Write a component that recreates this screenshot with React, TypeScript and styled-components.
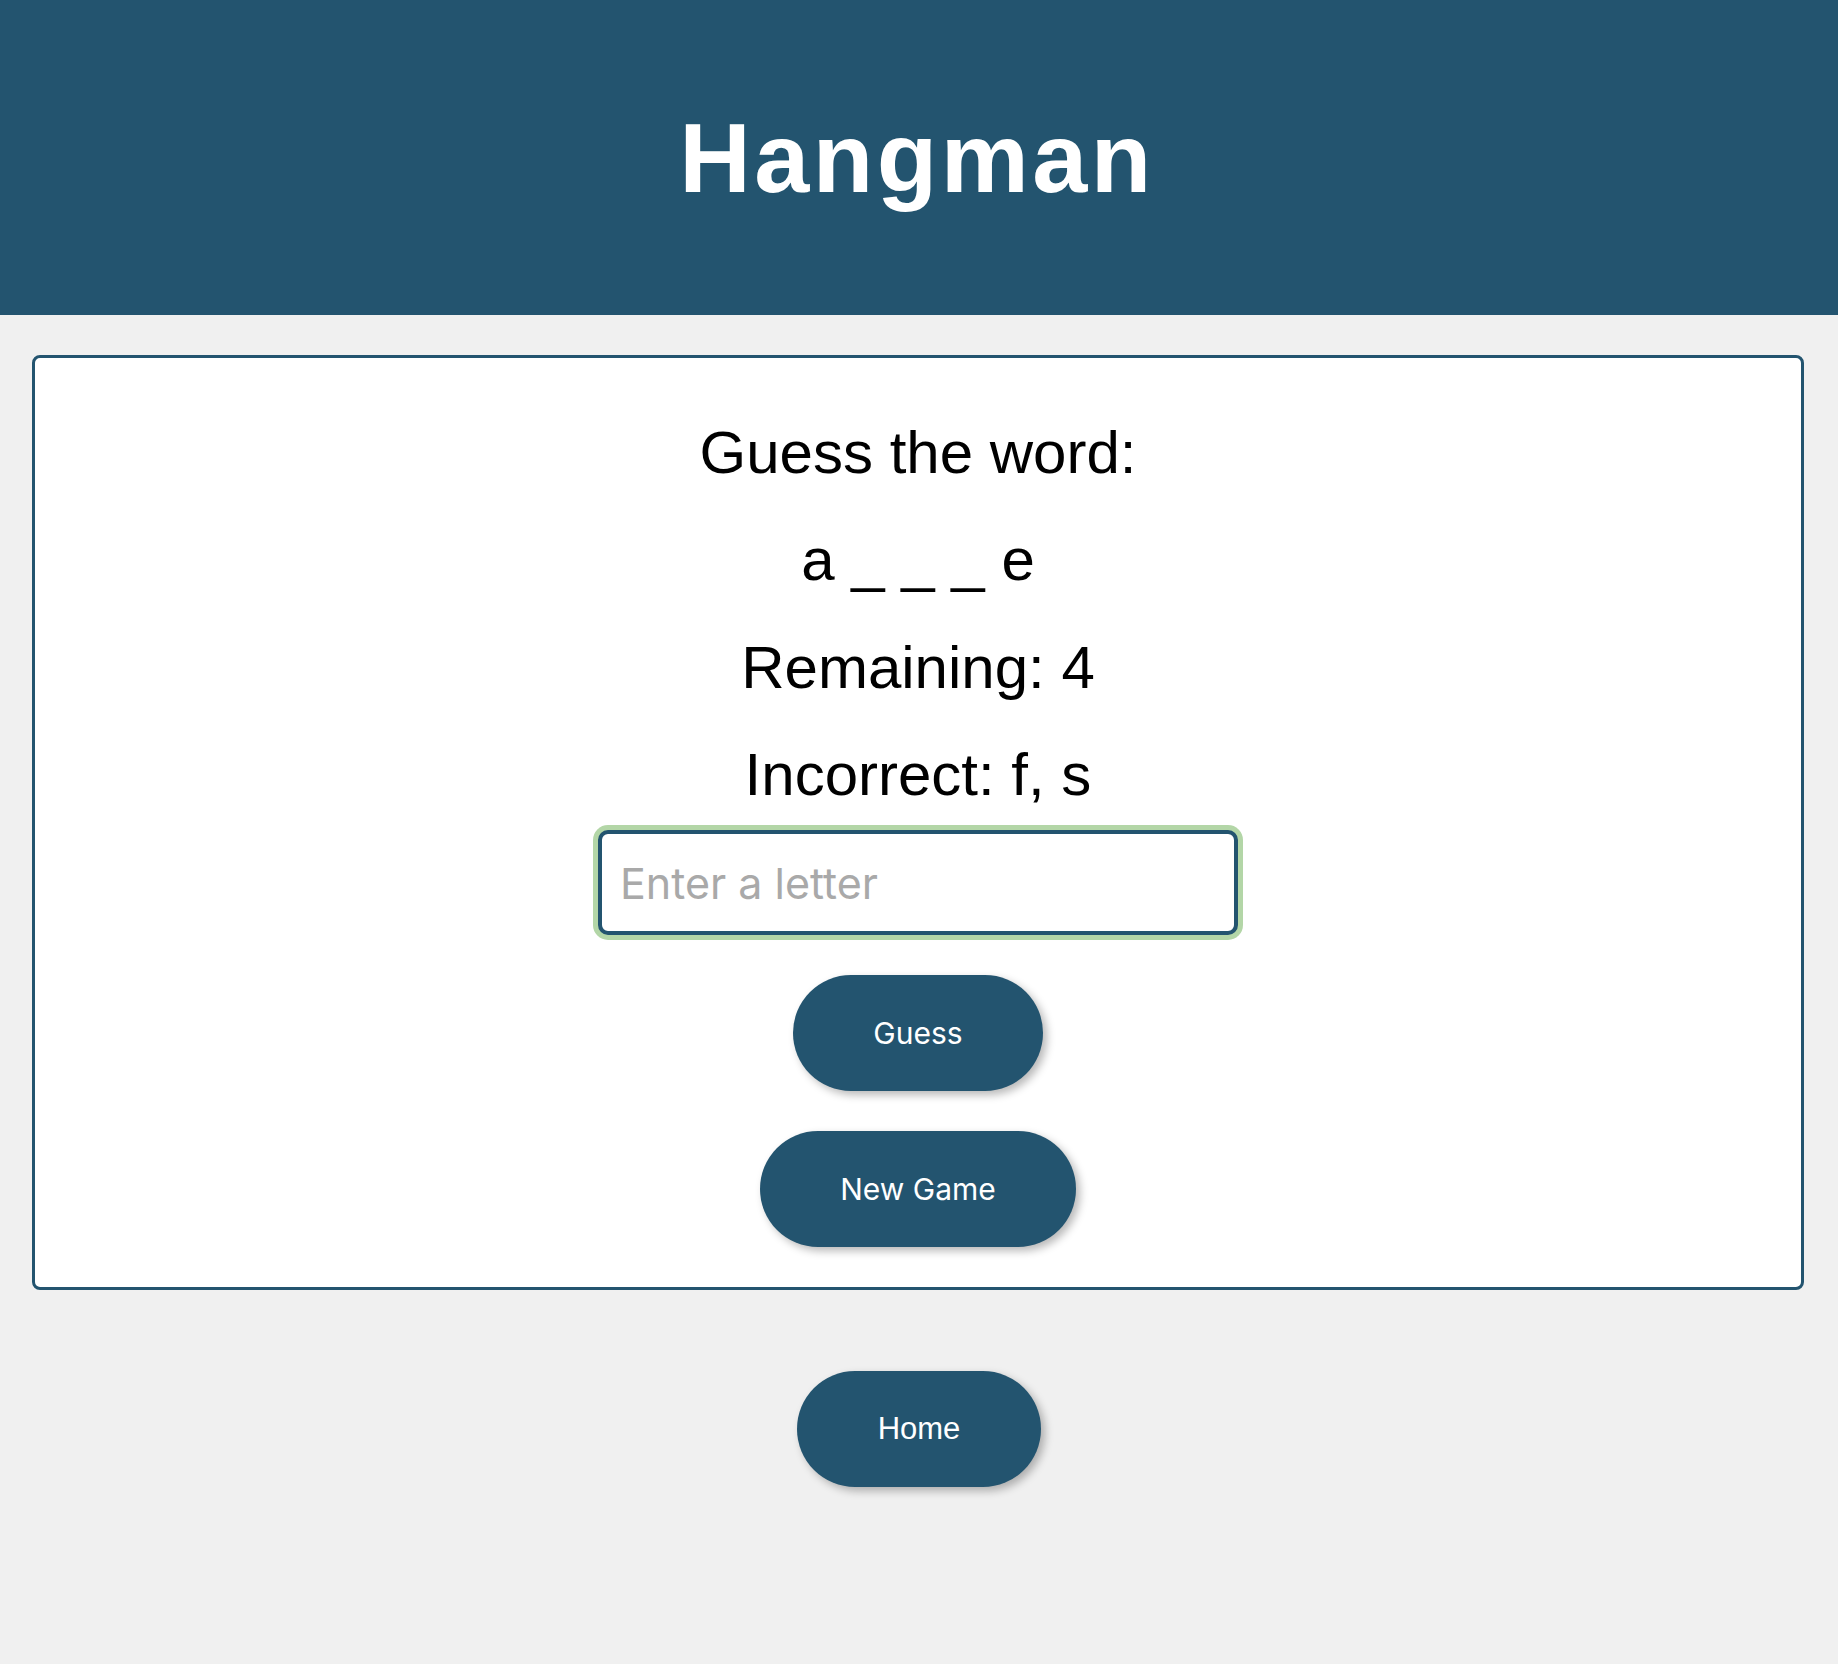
import React from "react";
import styled, { createGlobalStyle } from "styled-components";

const GlobalStyle = createGlobalStyle`
  html, body {
    margin: 0;
    padding: 0;
    background: #f0f0f0;
    font-family: "Liberation Sans", Arial, Helvetica, sans-serif;
  }
  * { box-sizing: border-box; }
`;

const Page = styled.div`
  min-height: 1664px;
  background: #f0f0f0;
`;

const Header = styled.header`
  height: 315px;
  background: #23546f;
  display: flex;
  align-items: center;
  justify-content: center;
`;

const Title = styled.h1`
  margin: 0;
  color: #ffffff;
  font-family: "Liberation Sans", Arial, Helvetica, sans-serif;
  font-weight: 700;
  font-size: 99px;
  letter-spacing: 3.5px;
  line-height: 1.15;
  padding-right: 4px;
`;

const Main = styled.main`
  padding: 40px 34px 0 32px;
  display: flex;
  flex-direction: column;
  align-items: stretch;
`;

const Card = styled.section`
  background: #ffffff;
  border: 3px solid #23546f;
  border-radius: 8px;
  padding: 61px 0 40px;
  display: flex;
  flex-direction: column;
  align-items: center;
`;

const Line = styled.p<{ $mt: number }>`
  margin: ${(p) => p.$mt}px 0 0;
  font-family: "Liberation Sans", Arial, Helvetica, sans-serif;
  font-size: 60px;
  line-height: 68px;
  color: #000000;
  text-align: center;
`;

const LetterInput = styled.input`
  margin-top: 21px;
  width: 640px;
  height: 105px;
  border: 4px solid #23546f;
  border-radius: 10px;
  box-shadow: 0 0 0 5px #b3d6a7;
  outline: none;
  padding: 0 18px;
  font-family: Inter, "Noto Sans", sans-serif;
  font-size: 43px;
  color: #000;
  background: #fff;
  &::placeholder {
    color: #a9a9a9;
  }
`;

const PillButton = styled.button<{ $mt: number }>`
  margin-top: ${(p) => p.$mt}px;
  height: 116px;
  padding: 0 80px;
  border: none;
  border-radius: 999px;
  background: #23546f;
  color: #ffffff;
  font-family: Inter, "Noto Sans", sans-serif;
  font-size: 30px;
  font-weight: 400;
  box-shadow: 4px 4px 8px rgba(0, 0, 0, 0.28);
  cursor: pointer;
`;

const HomeRow = styled.div`
  margin-top: 81px;
  display: flex;
  justify-content: center;
  padding-left: 2px;
`;

const HomeButton = styled(PillButton)`
  padding: 0 81px;
  font-family: "Liberation Sans", Arial, Helvetica, sans-serif;
  font-size: 31px;
`;

export default function App() {
  return (
    <>
      <GlobalStyle />
      <Page>
        <Header>
          <Title>Hangman</Title>
        </Header>
        <Main>
          <Card>
            <Line $mt={0}>Guess the word:</Line>
            <Line $mt={39}>a _ _ _ e</Line>
            <Line $mt={40}>Remaining: 4</Line>
            <Line $mt={39}>Incorrect: f, s</Line>
            <LetterInput type="text" placeholder="Enter a letter" maxLength={1} />
            <PillButton $mt={40}>Guess</PillButton>
            <PillButton $mt={40}>New Game</PillButton>
          </Card>
          <HomeRow>
            <HomeButton $mt={0}>Home</HomeButton>
          </HomeRow>
        </Main>
      </Page>
    </>
  );
}
